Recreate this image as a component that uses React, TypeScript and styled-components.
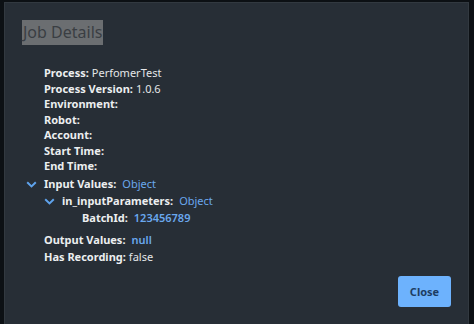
import styled, { createGlobalStyle } from "styled-components";

const GlobalStyle = createGlobalStyle`
  body {
    margin: 0;
    background: #0c1014;
    font-family: "Noto Sans", "Open Sans", sans-serif;
  }
`;

const Page = styled.div`
  height: 324px;
  padding: 2px 5px 0 4px;
  box-sizing: border-box;
`;

const Dialog = styled.div`
  height: 100%;
  box-sizing: border-box;
  background: #272e36;
  border: 1px solid #323940;
  border-bottom: none;
  display: flex;
  flex-direction: column;
  padding: 17px 17px 17px 17px;
`;

const Title = styled.h2`
  align-self: flex-start;
  margin: 0;
  padding: 0 1px;
  background: #6b6e71;
  color: #3a3e43;
  font-size: 16px;
  font-weight: 400;
  line-height: 25px;
`;

const Details = styled.div`
  margin-top: 20px;
  padding-left: 22px;
  color: #eceef0;
  font-size: 11px;
  flex: 1;
`;

const Row = styled.div<{ $indent?: number; $tall?: boolean; $gapTop?: number }>`
  position: relative;
  line-height: ${(p) => (p.$tall ? "17px" : "15.5px")};
  padding-left: ${(p) => p.$indent ?? 0}px;
  margin-top: ${(p) => p.$gapTop ?? 0}px;
  white-space: nowrap;
`;

const Label = styled.span<{ $wide?: boolean }>`
  font-weight: 700;
  margin-right: ${(p) => (p.$wide ? "6px" : "3px")};
`;

const Value = styled.span<{ $blue?: boolean; $bold?: boolean }>`
  color: ${(p) => (p.$blue ? "#6aa8ee" : "#e4e6e8")};
  font-weight: ${(p) => (p.$bold ? 600 : 400)};
`;

const Toggle = styled.span`
  position: absolute;
  top: 6px;
  margin-left: -18px;
  width: 11px;
  height: 7px;
  display: inline-flex;
`;

const Chevron = () => (
  <Toggle>
    <svg width="11" height="7" viewBox="0 0 11 7">
      <path d="M1.2 1.2 L5.5 5.4 L9.8 1.2" fill="none" stroke="#5fa3ec" strokeWidth="2" />
    </svg>
  </Toggle>
);

const Footer = styled.div`
  display: flex;
  justify-content: flex-end;
`;

const Button = styled.button`
  width: 53px;
  height: 31px;
  border: none;
  border-radius: 3px;
  background: #6db2fd;
  color: #1d3d63;
  font-family: inherit;
  font-size: 11px;
  font-weight: 700;
  cursor: pointer;
`;

export default function App() {
  return (
    <>
      <GlobalStyle />
      <Page>
        <Dialog>
          <Title>Job Details</Title>
          <Details>
            <Row>
              <Label>Process:</Label>
              <Value>PerfomerTest</Value>
            </Row>
            <Row>
              <Label>Process Version:</Label>
              <Value>1.0.6</Value>
            </Row>
            <Row>
              <Label>Environment:</Label>
            </Row>
            <Row>
              <Label>Robot:</Label>
            </Row>
            <Row>
              <Label>Account:</Label>
            </Row>
            <Row>
              <Label>Start Time:</Label>
            </Row>
            <Row>
              <Label>End Time:</Label>
            </Row>
            <Row $tall $gapTop={1}>
              <Chevron />
              <Label $wide>Input Values:</Label>
              <Value $blue>Object</Value>
            </Row>
            <Row $tall $indent={18}>
              <Chevron />
              <Label $wide>in_inputParameters:</Label>
              <Value $blue>Object</Value>
            </Row>
            <Row $tall $indent={38}>
              <Label $wide>BatchId:</Label>
              <Value $blue $bold>123456789</Value>
            </Row>
            <Row $tall $gapTop={5}>
              <Label $wide>Output Values:</Label>
              <Value $blue $bold>null</Value>
            </Row>
            <Row $tall>
              <Label>Has Recording:</Label>
              <Value>false</Value>
            </Row>
          </Details>
          <Footer>
            <Button>Close</Button>
          </Footer>
        </Dialog>
      </Page>
    </>
  );
}
